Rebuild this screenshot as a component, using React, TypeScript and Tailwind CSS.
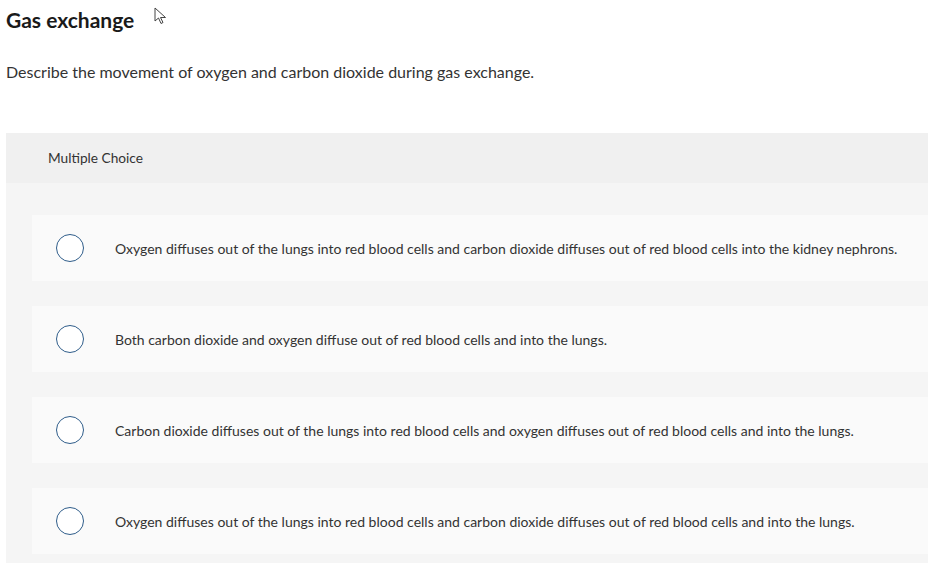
import React from "react";

const options = [
  "Oxygen diffuses out of the lungs into red blood cells and carbon dioxide diffuses out of red blood cells into the kidney nephrons.",
  "Both carbon dioxide and oxygen diffuse out of red blood cells and into the lungs.",
  "Carbon dioxide diffuses out of the lungs into red blood cells and oxygen diffuses out of red blood cells and into the lungs.",
  "Oxygen diffuses out of the lungs into red blood cells and carbon dioxide diffuses out of red blood cells and into the lungs.",
];

export default function App() {
  return (
    <div className="w-[928px] h-[566px] overflow-hidden bg-white text-[#333]" style={{ fontFamily: "Lato, 'Open Sans', sans-serif" }}>
      <div className="flex items-start pl-[6px] pt-[7px] h-[26px]">
        <h1 className="text-[21px] leading-[26px] font-bold text-[#1a1a1a]">Gas exchange</h1>
        <svg className="ml-[20px] mt-[0px]" width="14" height="18" viewBox="0 0 14 18">
          <path d="M1 1 L1 14 L4.5 11 L7 16.5 L9 15.5 L6.5 10.5 L11.5 10.5 Z" fill="white" stroke="#444" strokeWidth="1" strokeLinejoin="miter" />
        </svg>
      </div>
      <p className="pl-[6px] mt-[36px] text-[16px] leading-[20px] text-[#333]">
        Describe the movement of oxygen and carbon dioxide during gas exchange.
      </p>
      <div className="ml-[6px] mt-[51px] bg-[#f5f5f5] h-[430px]">
        <div className="h-[50px] bg-[#f0f0f0] flex items-center pl-[42px] text-[13.7px] text-[#333]">
          Multiple Choice
        </div>
        <div className="pt-[32px] pl-[26px] flex flex-col gap-[25px]">
          {options.map((o, i) => (
            <div key={i} className="h-[66px] bg-[#fafafa] flex items-center">
              <div className="ml-[24px] w-[28px] h-[28px] rounded-full border-[1.5px] border-[#2f5d8a] bg-white shrink-0" />
              <span className="ml-[31px] text-[14px] text-[#333] whitespace-nowrap">{o}</span>
            </div>
          ))}
        </div>
      </div>
    </div>
  );
}
